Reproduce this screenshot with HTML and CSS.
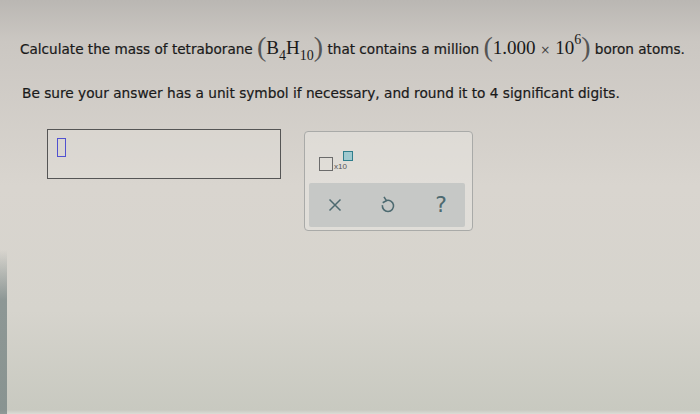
FILE: index.html
```html
<!DOCTYPE html>
<html>
<head>
<meta charset="utf-8">
<link rel="stylesheet" href="styles.css">
</head>
<body>
<div class="page">
  <p class="q1">Calculate the mass of tetraborane <span class="math"><span class="paren">(</span>B<sub>4</sub>H<sub>10</sub><span class="paren">)</span></span> that contains a million <span class="math"><span class="paren">(</span>1.000 <span class="times">×</span> 10<sup>6</sup><span class="paren">)</span></span> boron atoms.</p>
  <p class="q2">Be sure your answer has a unit symbol if necessary, and round it to 4 significant digits.</p>
  <div class="answer-row">
    <div class="input-box"><span class="cursor"></span></div>
    <div class="panel">
      <div class="panel-top">
        <span class="sci">
          <span class="sq"></span><span class="x10">x10</span><span class="sup-sq"></span>
        </span>
      </div>
      <div class="panel-bar">
        <span class="btn"><svg width="16" height="16" viewBox="0 0 16 16"><path d="M2.5 2.5 L13.5 13.5 M13.5 2.5 L2.5 13.5" stroke="#4d6a70" stroke-width="1.5" fill="none"/></svg></span>
        <span class="btn"><svg width="18" height="20" viewBox="0 0 18 20"><path d="M7.2 5.6 A5.6 5.6 0 1 1 3.4 10.2" stroke="#4d6a70" stroke-width="1.6" fill="none"/><path d="M5 1.8 L7.4 5.7 L3.7 7.8" stroke="#4d6a70" stroke-width="1.6" fill="none"/></svg></span>
        <span class="btn help">?</span>
      </div>
    </div>
  </div>
</div>
</body>
</html>
```

FILE: styles.css
```css
html, body {
  margin: 0;
  padding: 0;
}
body {
  width: 700px;
  height: 414px;
  overflow: hidden;
  background:
    linear-gradient(180deg, rgba(110,125,125,0) 0, rgba(110,125,125,0) 250px, rgba(110,125,125,0.7) 300px) left top / 7px 100% no-repeat,
    linear-gradient(180deg, #bab7b3 0%, #cbc7c2 10%, #d9d5cf 45%, #d6d4cd 75%, #c8c9c0 99%, #dcdcd6 100%);
  font-family: "DejaVu Sans", Verdana, sans-serif;
  color: #1a1a1a;
}
.page {
  padding: 32px 0 0 20px;
}
.q1 {
  margin: 0;
  font-size: 13.6px;
  line-height: 30px;
  white-space: nowrap;
  -webkit-text-stroke: 0.2px #1a1a1a;
}
.math {
  font-family: "Liberation Serif", "Times New Roman", serif;
  font-size: 19px;
  -webkit-text-stroke: 0;
}
.paren {
  font-size: 28px;
  color: #555;
  vertical-align: -2px;
}
.math sub {
  font-size: 14px;
  vertical-align: -6px;
  line-height: 0;
}
.math sup {
  font-size: 14px;
  vertical-align: 10px;
  line-height: 0;
}
.times {
  font-family: "DejaVu Sans", sans-serif;
  font-size: 12px;
  color: #444;
}
.q2 {
  margin: 18px 0 0 2px;
  font-size: 13.7px;
  line-height: 20px;
  white-space: nowrap;
  -webkit-text-stroke: 0.2px #1a1a1a;
}
.answer-row {
  display: flex;
  align-items: flex-start;
  margin: 26px 0 0 27px;
  gap: 23px;
}
.input-box {
  width: 234px;
  height: 50px;
  border: 1px solid #555;
  padding: 8px 0 0 9px;
  box-sizing: border-box;
  background: rgba(230,226,220,0.35);
}
.cursor {
  display: block;
  width: 9px;
  height: 19px;
  border: 1px solid #5151d0;
  box-sizing: border-box;
}
.panel {
  margin-top: 2px;
  width: 169px;
  height: 100px;
  border: 1px solid #a9aaa8;
  border-radius: 4px;
  box-sizing: border-box;
  background: rgba(235,233,228,0.45);
  padding: 0 7px 0 4px;
  display: flex;
  flex-direction: column;
}
.panel-top {
  height: 51px;
  display: flex;
  align-items: flex-end;
  padding-left: 10px;
}
.sci {
  position: relative;
  display: flex;
  align-items: flex-end;
  margin-bottom: 12px;
}
.sq {
  width: 14px;
  height: 14px;
  border: 1.5px solid #6b6b6b;
  box-sizing: border-box;
}
.x10 {
  font-family: "Liberation Sans", Arial, sans-serif;
  font-size: 8px;
  color: #555;
  margin-left: 1px;
  line-height: 8px;
}
.sup-sq {
  position: absolute;
  left: 24px;
  top: -6px;
  width: 10px;
  height: 10px;
  border: 1.5px solid #2f7e8c;
  background: #9fc9cf;
  box-sizing: border-box;
}
.panel-bar {
  height: 44px;
  background: #c6c8c6;
  border-radius: 2px;
  display: flex;
  align-items: center;
  justify-content: center;
  gap: 33px;
  padding-left: 2px;
}
.btn {
  display: flex;
  width: 20px;
  justify-content: center;
}
.help {
  font-family: "DejaVu Sans", sans-serif;
  font-size: 22px;
  color: #4d6a70;
  line-height: 22px;
}
```
